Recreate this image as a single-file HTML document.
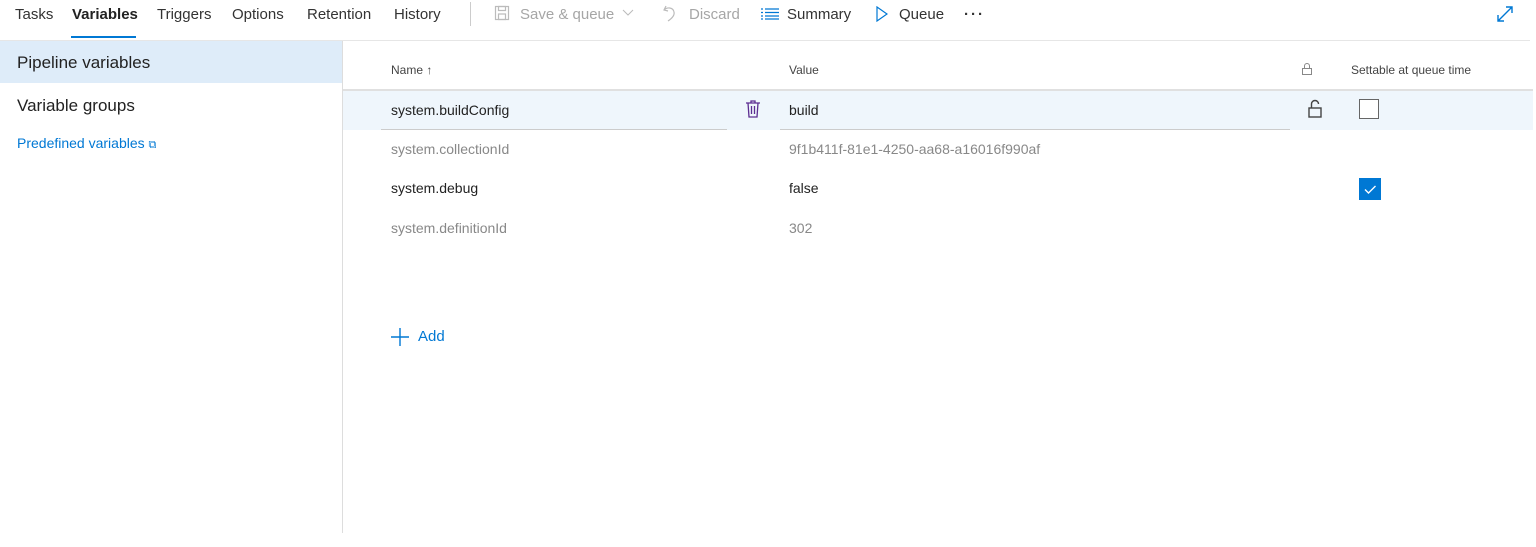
<!DOCTYPE html>
<html><head><style>
body{margin:0;width:1536px;height:547px;background:#fff;font-family:"Liberation Sans",sans-serif;color:#333;position:relative;overflow:hidden}
.a{position:absolute;white-space:nowrap}
.tab{top:6px;font-size:15px;color:#333}
.g{color:#a6a6a6}
.row{font-size:14px}
.h{font-size:12px;color:#444;top:63px}
</style></head><body>
<div class="a tab" style="left:15px">Tasks</div>
<div class="a tab" style="left:72px;font-weight:bold;color:#222">Variables</div>
<div class="a" style="left:71px;top:36px;width:65px;height:2px;background:#0078d4"></div>
<div class="a tab" style="left:157px">Triggers</div>
<div class="a tab" style="left:232px">Options</div>
<div class="a tab" style="left:307px">Retention</div>
<div class="a tab" style="left:394px">History</div>
<div class="a" style="left:470px;top:2px;width:1px;height:24px;background:#ccc"></div>
<svg class="a" style="left:494px;top:5px" width="16" height="16" viewBox="0 0 16 16" fill="none" stroke="#bbb" stroke-width="1.2"><rect x="1.5" y="1.5" width="13" height="13"/><rect x="4.5" y="1.5" width="7" height="4"/><rect x="4.5" y="9" width="7" height="5.5"/></svg>
<div class="a tab g" style="left:520px">Save &amp; queue</div>
<svg class="a" style="left:622px;top:9px" width="12" height="8"><path d="M1 1l5 5 5-5" stroke="#bbb" fill="none"/></svg>
<svg class="a" style="left:662px;top:4px" width="16" height="18"><path d="M4 2L2 6l4 1M2 6c3-3 9-3 10 2 1 4-3 7-6 9" stroke="#bbb" fill="none" stroke-width="1.2"/></svg>
<div class="a tab g" style="left:689px">Discard</div>
<svg class="a" style="left:761px;top:8px" width="18" height="12" stroke="#0078d4" stroke-width="1.3"><path d="M0 1h2M0 4.5h2M0 8h2M0 11h2M4 1h14M4 4.5h14M4 8h14M4 11h14"/></svg>
<div class="a tab" style="left:787px">Summary</div>
<svg class="a" style="left:876px;top:6px" width="12" height="16"><path d="M1 1l10 7-10 7z" stroke="#0078d4" fill="none" stroke-width="1.2"/></svg>
<div class="a tab" style="left:899px">Queue</div>
<div class="a tab" style="left:964px;letter-spacing:2px;font-weight:bold">···</div>
<svg class="a" style="left:1496px;top:5px" width="18" height="18" stroke="#0078d4" stroke-width="1.4" fill="none"><path d="M2 16L16 2M2 10v6h6M10 2h6v6"/></svg>
<div class="a" style="left:0;top:40px;width:1530px;height:1px;background:#e6e6e6"></div>
<div class="a" style="left:0;top:41px;width:342px;height:42px;background:#deecf9"></div>
<div class="a" style="left:342px;top:41px;width:1px;height:492px;background:#ddd"></div>
<div class="a" style="left:17px;top:53px;font-size:17px;color:#222">Pipeline variables</div>
<div class="a" style="left:17px;top:96px;font-size:17px;color:#222">Variable groups</div>
<div class="a" style="left:17px;top:135px;font-size:14px;color:#0078d4">Predefined variables <span style="font-size:11px">⧉</span></div>
<div class="a h" style="left:391px">Name ↑</div>
<div class="a h" style="left:789px">Value</div>
<svg class="a" style="left:1301px;top:62px" width="12" height="14" stroke="#888" fill="none"><rect x="1.5" y="6.5" width="9" height="6"/><path d="M3.5 6.5V4a2.5 2.5 0 015 0v2.5"/></svg>
<div class="a h" style="left:1351px">Settable at queue time</div>
<div class="a" style="left:343px;top:89px;width:1190px;height:2px;background:#e0e0e0"></div>
<div class="a" style="left:343px;top:91px;width:1190px;height:39px;background:#eff6fc"></div>
<div class="a" style="left:381px;top:129px;width:346px;height:1px;background:#ccc"></div>
<div class="a" style="left:780px;top:129px;width:510px;height:1px;background:#ccc"></div>
<div class="a row" style="left:391px;top:102px;color:#222">system.buildConfig</div>
<svg class="a" style="left:745px;top:100px" width="16" height="18" stroke="#5c2d91" fill="none" stroke-width="1.3"><path d="M1 3h14M6 3V1h4v2M3 3l1 14h8l1-14M6.5 6v8M9.5 6v8"/></svg>
<div class="a row" style="left:789px;top:102px;color:#222">build</div>
<svg class="a" style="left:1307px;top:99px" width="16" height="20" stroke="#444" fill="none" stroke-width="1.4"><rect x="2" y="9" width="12" height="9"/><path d="M4.5 9V5a3.5 3.5 0 017 0"/></svg>
<div class="a" style="left:1359px;top:99px;width:20px;height:20px;border:1px solid #666;box-sizing:border-box;background:#fff"></div>
<div class="a row g" style="left:391px;top:141px;color:#888">system.collectionId</div>
<div class="a row" style="left:789px;top:141px;color:#888">9f1b411f-81e1-4250-aa68-a16016f990af</div>
<div class="a row" style="left:391px;top:180px;color:#222">system.debug</div>
<div class="a row" style="left:789px;top:180px;color:#222">false</div>
<div class="a" style="left:1359px;top:178px;width:22px;height:22px;background:#0078d4"></div>
<svg class="a" style="left:1359px;top:178px" width="22" height="22"><path d="M6 11.5l3.5 3.5 7-7" stroke="#fff" fill="none" stroke-width="1.4"/></svg>
<div class="a row" style="left:391px;top:220px;color:#888">system.definitionId</div>
<div class="a row" style="left:789px;top:220px;color:#888">302</div>
<svg class="a" style="left:391px;top:328px" width="18" height="18" stroke="#0078d4" stroke-width="1.4"><path d="M9 0v18M0 9h18"/></svg>
<div class="a" style="left:418px;top:328px;font-size:15px;color:#0078d4">Add</div>
</body></html>
